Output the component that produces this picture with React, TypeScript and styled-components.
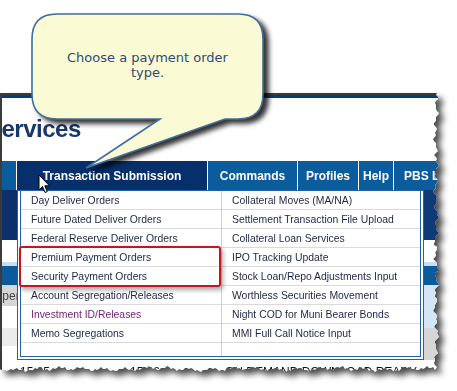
import React from "react";
import styled, { createGlobalStyle } from "styled-components";

// torn right and bottom edge of the screenshot
const tornEdge = (() => {
  const pts: string[] = ["0 0", "437px 0"];
  for (let y = 2; y < 276; y += 2) {
    const x =
      436 + Math.round(Math.sin(y * 2.3) * 1 + Math.sin(y * 0.37) * 1.3 + Math.sin(y * 0.11) * 0.8);
    pts.push(`${x}px ${y}px`);
  }
  for (let x = 435; x > 0; x -= 2) {
    const y =
      276 + Math.round(Math.sin(x * 2.1) * 1 + Math.sin(x * 0.29) * 1.3 + Math.sin(x * 0.07) * 0.8);
    pts.push(`${x}px ${y}px`);
  }
  pts.push("0 276px");
  return `polygon(${pts.join(",")})`;
})();

const GlobalStyle = createGlobalStyle`
  html, body {
    margin: 0;
    padding: 0;
    background: #fff;
  }
  body {
    font-family: "Liberation Sans", Arial, sans-serif;
  }
`;

// Components
const Page = styled.div`
  position: relative;
  width: 457px;
  height: 391px;
  overflow: hidden;
  background: #fff;
  padding-top: 93px;
  box-sizing: border-box;
`;

const ShotShadow = styled.div`
  width: 440px;
  filter: drop-shadow(5px 5px 3px rgba(0, 0, 0, 0.7));
`;

const Shot = styled.div`
  position: relative;
  height: 285px;
  box-sizing: border-box;
  border-left: 2px solid #3b3b3b;
  border-top: 2px solid #3b3b3b;
  background: #fff;
  overflow: hidden;
  clip-path: ${tornEdge};
`;

const TopBar = styled.div`
  height: 3px;
  background: #0c3a74;
`;

const Header = styled.div`
  height: 63px;
  box-sizing: border-box;
  padding-top: 17px;
  overflow: hidden;
`;

const Title = styled.h1`
  margin: 0 0 0 -16px;
  font-size: 24px;
  line-height: 28px;
  font-weight: bold;
  letter-spacing: -0.5px;
  color: #17386b;
  white-space: nowrap;
`;

const Nav = styled.div`
  display: flex;
  height: 29px;
  background: #fff;
  overflow: hidden;
`;

const NavItem = styled.div<{ $w?: number; $bg: string; $left?: boolean }>`
  flex: ${(p) => (p.$w ? `0 0 ${p.$w}px` : "1 1 auto")};
  display: flex;
  align-items: center;
  justify-content: ${(p) => (p.$left ? "flex-start" : "center")};
  padding-left: ${(p) => (p.$left ? "10px" : "0")};
  box-sizing: border-box;
  border-left: 1px solid #fff;
  background: ${(p) => p.$bg};
  color: #fff;
  font-size: 12px;
  font-weight: bold;
  white-space: nowrap;
  overflow: hidden;
  &:first-child {
    border-left: 0;
  }
`;

const Under = styled.div`
  position: relative;
`;

const BgRow = styled.div<{ $h: number; $l: string; $r: string }>`
  height: ${(p) => p.$h}px;
  background: linear-gradient(to right, ${(p) => p.$l} 0 50%, ${(p) => p.$r} 50% 100%);
  overflow: hidden;
  font-size: 12px;
  color: #444;
`;

const BgText = styled.span`
  display: inline-block;
  margin: 4px 0 0 -9px;
`;

const StatusRow = styled.div`
  display: flex;
  padding-top: 5px;
  height: 20px;
  font-size: 12px;
  line-height: 14px;
  color: #111;
  white-space: nowrap;
`;

const StatusCell = styled.div<{ $w: number }>`
  flex: 0 0 ${(p) => p.$w}px;
`;

const Menu = styled.div`
  position: absolute;
  left: 15px;
  top: 0;
  width: 407px;
  box-sizing: border-box;
  border: 1px solid #1f63a8;
  padding: 0 2px 2px;
  background: #fff;
`;

const MenuInner = styled.div`
  display: grid;
  grid-template-columns: 201px 1fr;
  height: 166px;
  box-sizing: border-box;
  border: 1px solid #1f63a8;
  border-top: 0;
`;

const MenuColumn = styled.div<{ $divider?: boolean }>`
  display: flex;
  flex-direction: column;
  border-right: ${(p) => (p.$divider ? "1px solid #d0d0d0" : "0")};
`;

const MenuItem = styled.div<{ $visited?: boolean }>`
  height: 19px;
  box-sizing: border-box;
  border-bottom: 1px solid #dadada;
  padding-left: 10px;
  font-size: 10.4px;
  line-height: 20px;
  overflow: hidden;
  white-space: nowrap;
  color: ${(p) => (p.$visited ? "#6e1f6e" : "#1e2645")};
`;

const RedBox = styled.div`
  position: absolute;
  left: 17px;
  top: 56px;
  width: 202px;
  height: 41px;
  box-sizing: border-box;
  border: 2px solid #c4161c;
  border-radius: 3px;
  box-shadow: 2px 3px 5px rgba(0, 0, 0, 0.35);
`;

const Callout = styled.div`
  position: absolute;
  left: 0;
  top: 0;
  width: 280px;
  height: 180px;
  pointer-events: none;
`;

const CalloutShape = styled.svg`
  position: absolute;
  left: 0;
  top: 0;
  filter: drop-shadow(5px 4px 2.5px rgba(0, 0, 0, 0.8));
`;

const CalloutText = styled.div`
  position: absolute;
  left: 32px;
  top: 50px;
  width: 231px;
  text-align: center;
  font-family: "DejaVu Sans", Verdana, sans-serif;
  font-size: 13px;
  line-height: 15px;
  color: #2f4a78;
`;

const Cursor = styled.svg`
  position: absolute;
  left: 38px;
  top: 174px;
`;

const leftItems = [
  { label: "Day Deliver Orders" },
  { label: "Future Dated Deliver Orders" },
  { label: "Federal Reserve Deliver Orders" },
  { label: "Premium Payment Orders" },
  { label: "Security Payment Orders" },
  { label: "Account Segregation/Releases" },
  { label: "Investment ID/Releases", visited: true },
  { label: "Memo Segregations" },
];

const rightItems = [
  { label: "Collateral Moves (MA/NA)" },
  { label: "Settlement Transaction File Upload" },
  { label: "Collateral Loan Services" },
  { label: "IPO Tracking Update" },
  { label: "Stock Loan/Repo Adjustments Input" },
  { label: "Worthless Securities Movement" },
  { label: "Night COD for Muni Bearer Bonds" },
  { label: "MMI Full Call Notice Input" },
];

const bubblePath =
  "M57 14 H238 Q263 14 263 39 V94 Q263 119 238 119 H225 L86 168 L160 119 H57 Q32 119 32 94 V39 Q32 14 57 14 Z";

function App() {
  return (
    <>
      <GlobalStyle />
      <Page>
        <ShotShadow>
          <Shot>
            <TopBar />
            <Header>
              <Title>Services</Title>
            </Header>
            <Nav>
              <NavItem $w={14} $bg="#0b5c9d" />
              <NavItem $w={191} $bg="#062f6c">
                Transaction Submission
              </NavItem>
              <NavItem $w={90} $bg="#0b5c9d">
                Commands
              </NavItem>
              <NavItem $w={61} $bg="#0b5c9d">
                Profiles
              </NavItem>
              <NavItem $w={35} $bg="#0b5c9d">
                Help
              </NavItem>
              <NavItem $bg="#0b5c9d" $left>
                PBS Links
              </NavItem>
            </Nav>
            <Under>
              <BgRow $h={50} $l="#0d2f6b" $r="#0f3a76" />
              <BgRow $h={22} $l="#fff" $r="#fff" />
              <BgRow $h={4} $l="#c9def2" $r="#c9def2" />
              <BgRow $h={19} $l="#0b5b9c" $r="#0b5b9c" />
              <BgRow $h={21} $l="#d6d6d6" $r="#d4e6f6">
                <BgText>Open</BgText>
              </BgRow>
              <BgRow $h={22} $l="#fff" $r="#d4e6f6" />
              <BgRow $h={18} $l="#ebebeb" $r="#d6d6d6" />
              <BgRow $h={14} $l="#fff" $r="#d6d6d6" />
              <StatusRow>
                <StatusCell $w={18} />
                <StatusCell $w={110}>15:05</StatusCell>
                <StatusCell $w={95}>15:06</StatusCell>
                <StatusCell $w={220}>ON DEMAND DOWNLOAD READY</StatusCell>
              </StatusRow>

              <Menu>
                <MenuInner>
                  <MenuColumn $divider>
                    {leftItems.map((item) => (
                      <MenuItem key={item.label} $visited={item.visited}>
                        {item.label}
                      </MenuItem>
                    ))}
                  </MenuColumn>
                  <MenuColumn>
                    {rightItems.map((item) => (
                      <MenuItem key={item.label}>{item.label}</MenuItem>
                    ))}
                  </MenuColumn>
                </MenuInner>
              </Menu>
              <RedBox />
            </Under>
          </Shot>
        </ShotShadow>

        <Cursor width="13" height="20" viewBox="0 0 13 20">
          <path
            d="M1 1 L1 16 L4.5 12.5 L7 18.5 L9.2 17.6 L6.8 11.8 L11.5 11.8 Z"
            fill="#fff"
            stroke="#000"
            strokeWidth="1"
            strokeLinejoin="miter"
          />
        </Cursor>

        <Callout>
          <CalloutShape width="280" height="180" viewBox="0 0 280 180">
            <path d={bubblePath} fill="#fafad4" stroke="#3f6e9f" strokeWidth="1.6" />
          </CalloutShape>
          <CalloutText>
            Choose a payment order
            <br />
            type.
          </CalloutText>
        </Callout>
      </Page>
    </>
  );
}

export default App;
